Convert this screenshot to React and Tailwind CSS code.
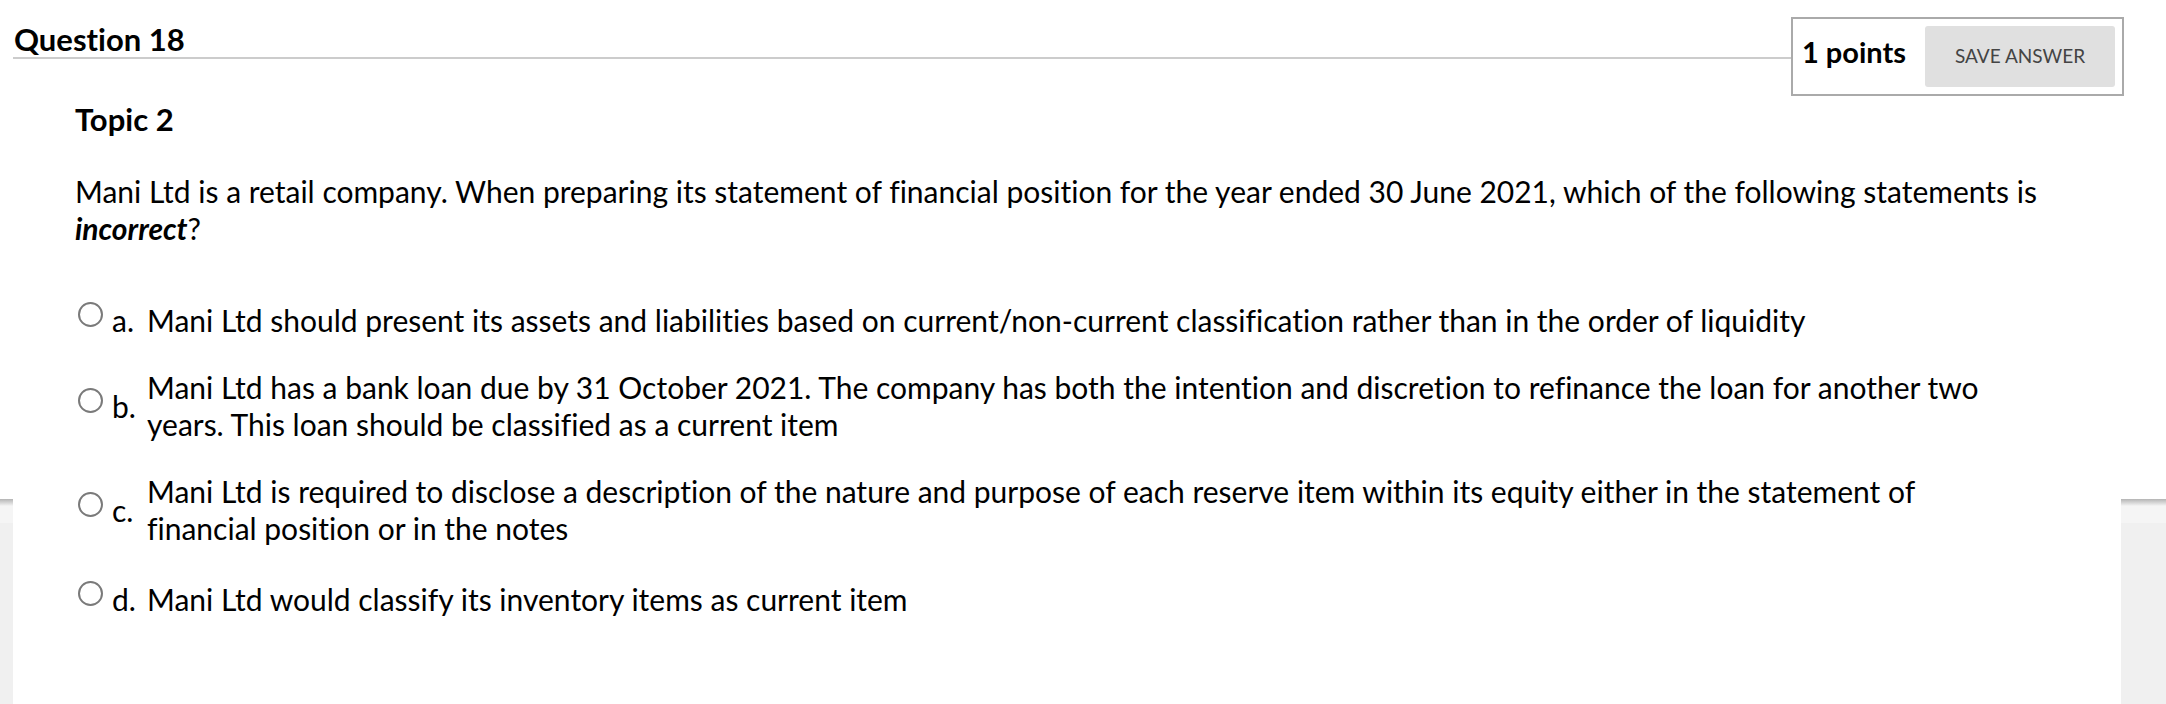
const options = [
  {
    key: "a",
    text: "Mani Ltd should present its assets and liabilities based on current/non-current classification rather than in the order of liquidity",
  },
  {
    key: "b",
    text: "Mani Ltd has a bank loan due by 31 October 2021. The company has both the intention and discretion to refinance the loan for another two years. This loan should be classified as a current item",
  },
  {
    key: "c",
    text: "Mani Ltd is required to disclose a description of the nature and purpose of each reserve item within its equity either in the statement of financial position or in the notes",
  },
  {
    key: "d",
    text: "Mani Ltd would classify its inventory items as current item",
  },
];

// grey page background peeking out beside the white question card
const Side = ({ className }) => (
  <div className={`flex flex-col ${className}`}>
    <div className="h-[499px] bg-white" />
    <div className="h-[7px] bg-gradient-to-b from-[#b4b4b4] to-[#f5f5f5]" />
    <div className="h-[17px] bg-[#f5f5f5]" />
    <div className="flex-1 bg-[#f0f0f0]" />
  </div>
);

const Option = ({ opt, last }) => (
  <label className={`flex items-center cursor-pointer ${last ? "mt-[4px]" : ""}`}>
    <span className="mb-[12px] h-[25px] w-[25px] shrink-0 rounded-full border-2 border-[#7a7a7a] bg-white" />
    <span className="ml-[9px] w-[35px] shrink-0">{opt.key}.</span>
    <span className="w-[1878px]">{opt.text}</span>
  </label>
);

export default function App() {
  return (
    <div className="flex h-[704px] w-[2166px] overflow-hidden bg-white font-['Lato',sans-serif] text-black [font-variant-ligatures:none]">
      <Side className="w-[13px] shrink-0" />

      <main className="relative z-10 w-[2108px] shrink-0 bg-white">
        {/* header */}
        <div className="mt-[17px] flex w-[2111px]">
          <div className="flex-1 self-start pt-[4px]">
            <h2 className="border-b-2 border-[#cccccc] pl-[1px] text-[31px] font-bold leading-[36px]">
              Question 18
            </h2>
          </div>
          <div className="flex h-[79px] w-[333px] shrink-0 items-start border-2 border-[#aaaaaa] bg-white pl-[9px] pt-[7px]">
            <span className="mt-[8px] whitespace-nowrap text-[29px] font-bold leading-[36px]">1 points</span>
            <button className="ml-auto mr-[7px] h-[61px] w-[190px] shrink-0 rounded-[3px] bg-[#e0e0e0] text-[19px] text-[#444444]">
              SAVE ANSWER
            </button>
          </div>
        </div>

        {/* question body */}
        <div className="ml-[62px]">
          <h3 className="mt-[4px] text-[31px] font-bold leading-[38px]">Topic 2</h3>

          <p className="mt-[35px] w-[1975px] text-[30px] leading-[37px]">
            Mani Ltd is a retail company. When preparing its statement of financial position for the year ended 30
            June 2021, which of the following statements is <strong className="italic font-bold">incorrect</strong>?
          </p>

          <div className="ml-[3px] mt-[55px] flex flex-col gap-[30px] text-[30px] leading-[37px]">
            {options.map((opt, i) => (
              <Option key={opt.key} opt={opt} last={i === options.length - 1} />
            ))}
          </div>
        </div>
      </main>

      <Side className="flex-1" />
    </div>
  );
}
